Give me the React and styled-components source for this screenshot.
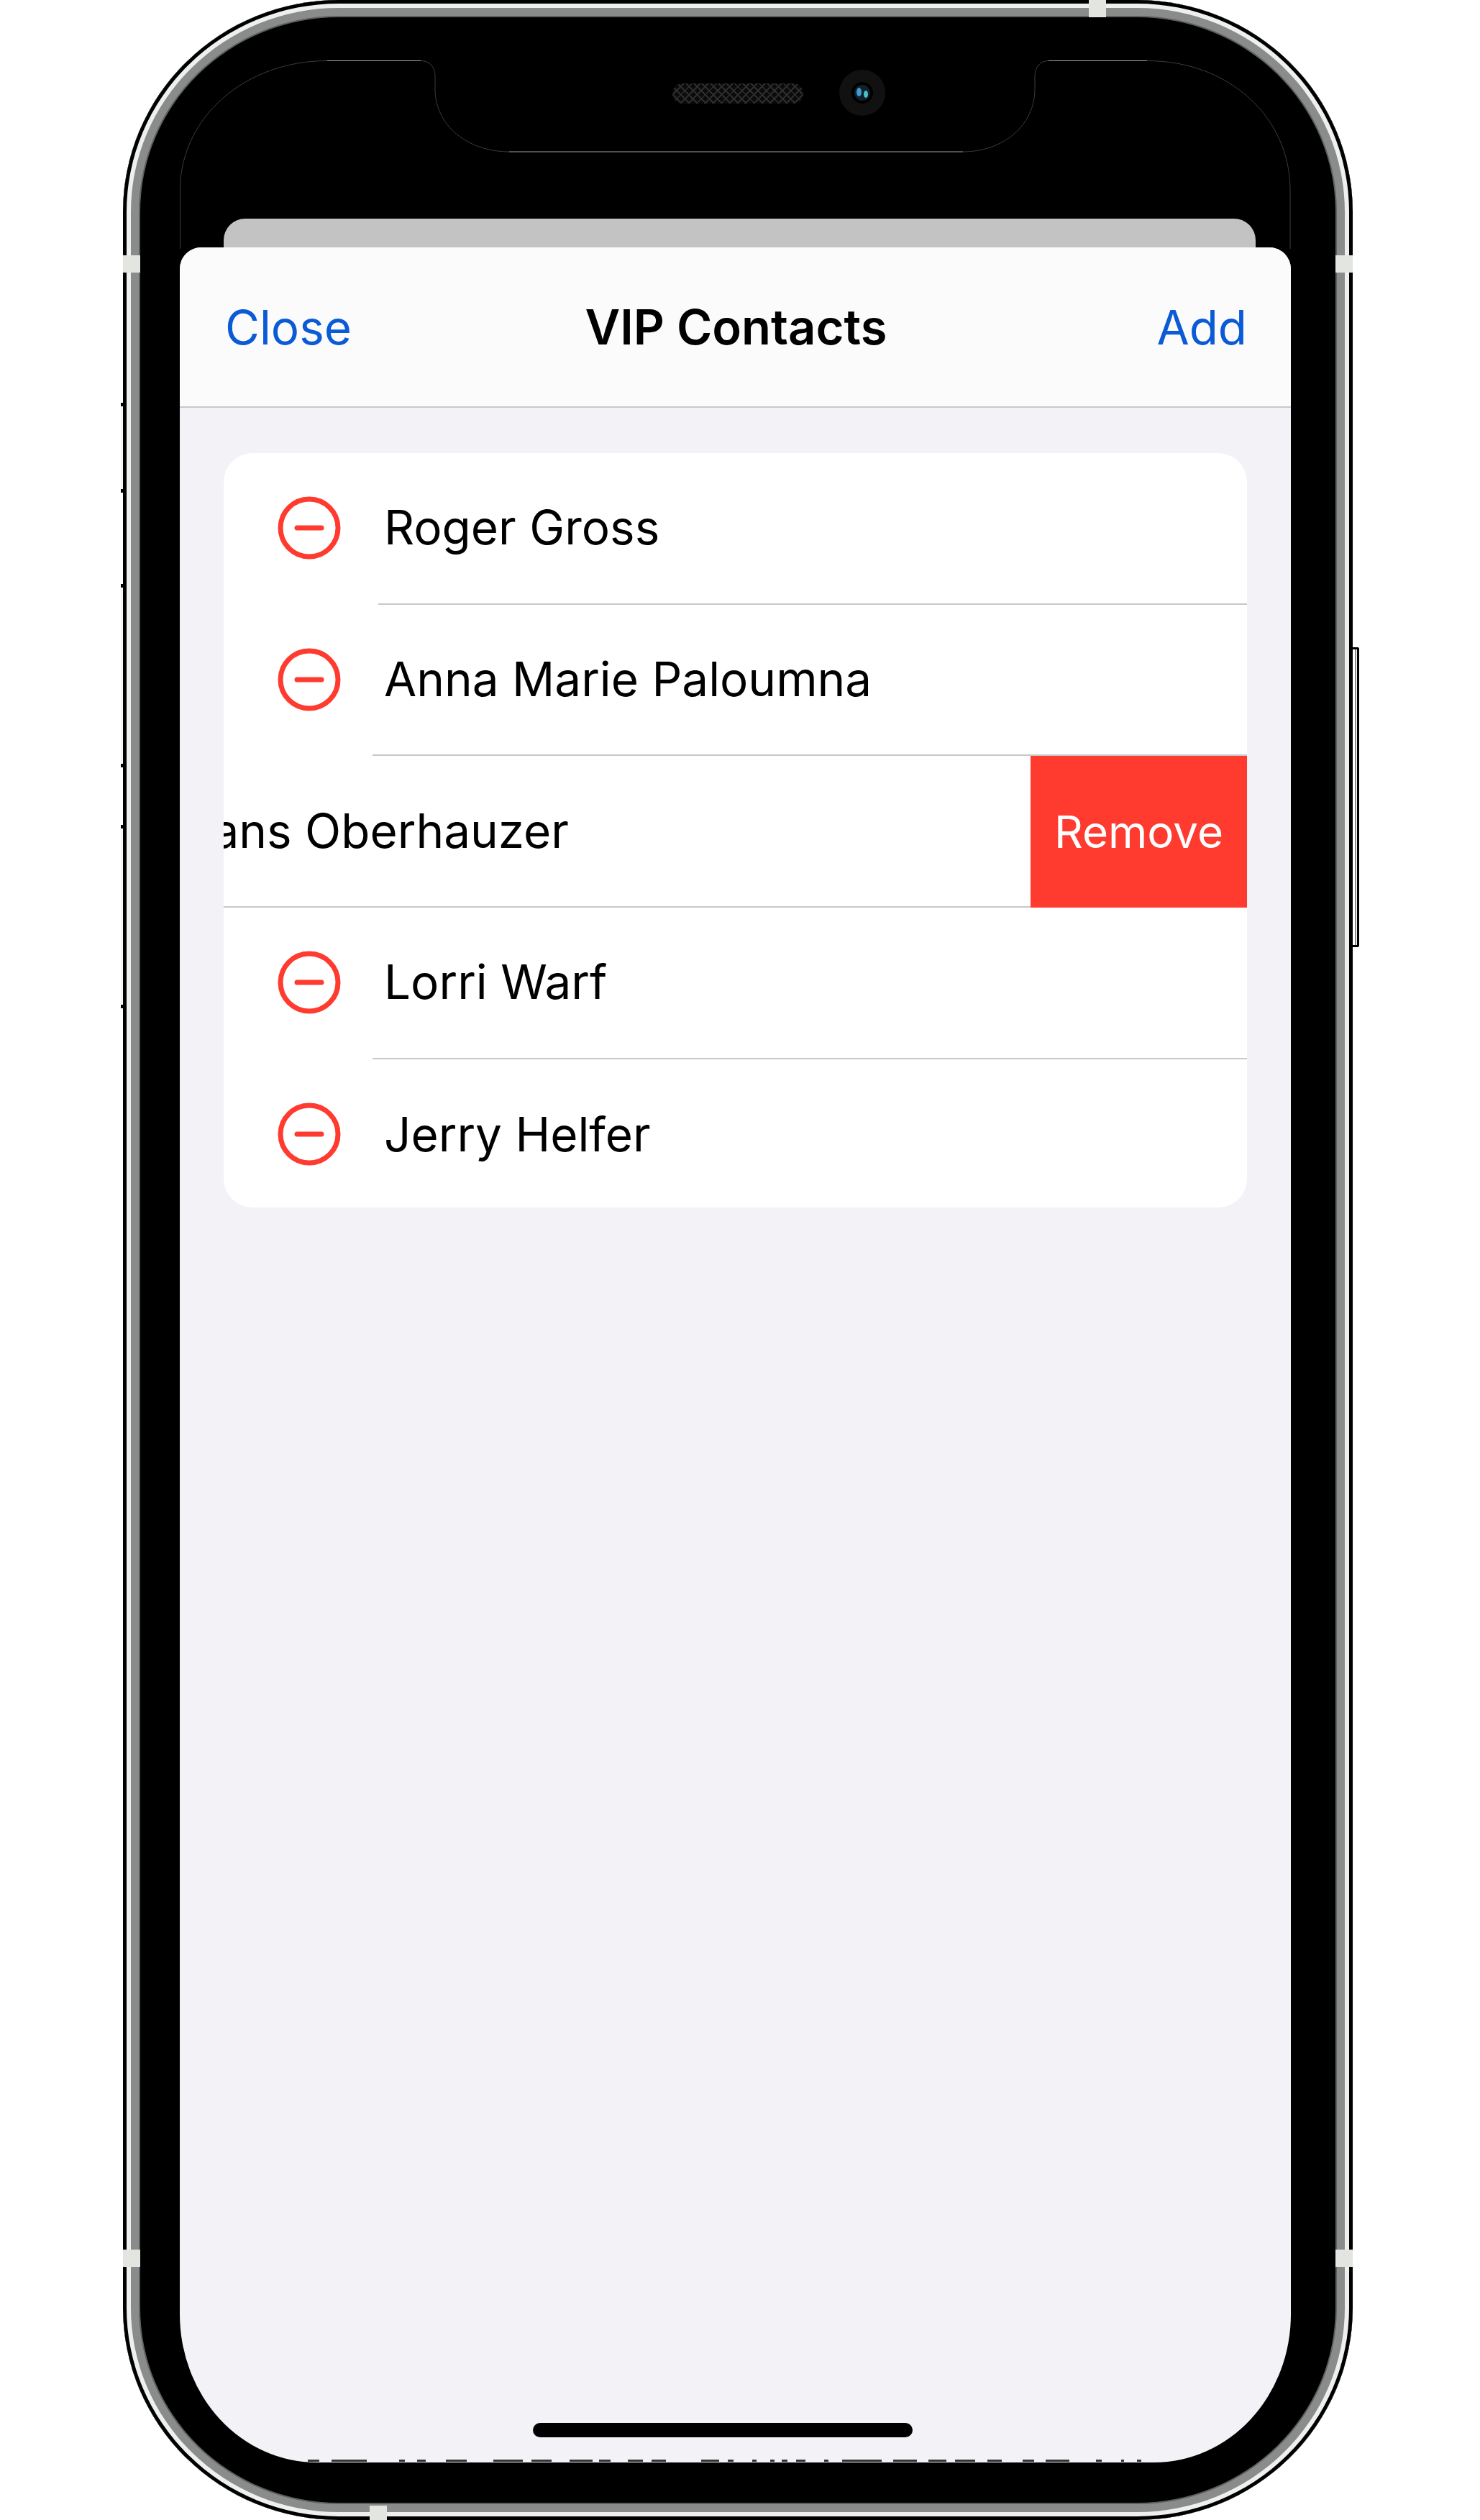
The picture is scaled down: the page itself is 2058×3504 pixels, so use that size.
import React from "react";
import styled, { createGlobalStyle } from "styled-components";

const GlobalStyle = createGlobalStyle`
  html, body {
    margin: 0;
    background: #fff;
    font-family: Inter, "Liberation Sans", sans-serif;
  }
`;

const Page = styled.div`
  box-sizing: border-box;
  height: 3504px;
  padding: 0 177px 0 171px;
`;

const Frame = styled.div`
  position: relative;
  box-sizing: border-box;
  display: flex;
  height: 100%;
  padding: 84px 86px 80px 79px;
  background: #000;
  border-radius: 300px / 295px;
  box-shadow:
    inset 0 0 0 5px #000,
    inset 0 0 0 11px #eef0ed,
    inset 0 0 0 22px #8a8c8c,
    inset 0 0 0 24px #5f6161;
`;

const AntennaBand = styled.div`
  position: absolute;
  width: 24px;
  height: 24px;
  background: #e3e5e0;
`;

const SideBand = styled(AntennaBand)`
  top: ${(p) => p.$top}px;
  ${(p) => (p.$right ? "right: 0;" : "left: 0;")}
`;

const EdgeBand = styled(AntennaBand)`
  left: ${(p) => p.$left}px;
  ${(p) => (p.$bottom ? "bottom: 0; height: 20px;" : "top: 0;")}
`;

const VolumeKey = styled.div`
  position: absolute;
  left: -3px;
  top: ${(p) => p.$top}px;
  width: 3px;
  height: ${(p) => p.$height}px;
  box-sizing: border-box;
  background: linear-gradient(to right, #e8e8e8, #fff);
  border-top: 5px solid #000;
  border-bottom: 5px solid #000;
`;

const PowerKey = styled.div`
  position: absolute;
  right: -9px;
  top: 900px;
  width: 9px;
  height: 417px;
  box-sizing: border-box;
  background: linear-gradient(to right, #fff 0 55%, #8a8a8a 55% 75%, #fff 75%);
  border: 3px solid #000;
  border-left: 0;
  border-radius: 0 3px 3px 0;
`;

const Screen = styled.div`
  position: relative;
  flex: 1;
  min-width: 0;
  display: flex;
  flex-direction: column;
  overflow: hidden;
  border-radius: 0 0 190px 190px / 0 0 206px 206px;
`;

const ScreenOutline = styled.svg`
  position: absolute;
  top: 0;
  left: 0;
`;

const TopZone = styled.div`
  box-sizing: border-box;
  height: 220px;
  flex: none;
  display: flex;
  align-items: flex-start;
  gap: 50px;
  padding: 13px 0 0 685px;
`;

const Speaker = styled.div`
  width: 182px;
  height: 28px;
  margin-top: 19px;
  border-radius: 14px;
  background-color: #0b0b0b;
  background-image:
    repeating-linear-gradient(45deg, #2c2c2c 0 2px, transparent 2px 8px),
    repeating-linear-gradient(-45deg, #2c2c2c 0 2px, transparent 2px 8px);
`;

const BackCard = styled.div`
  flex: none;
  height: 40px;
  margin: 0 49px 0 61px;
  background: #c3c3c3;
  border-radius: 30px 30px 0 0;
`;

const Sheet = styled.div`
  position: relative;
  flex: 1;
  display: flex;
  flex-direction: column;
  border-radius: 30px 30px 0 0;
  background: #f2f2f7;
  overflow: hidden;
`;

const Header = styled.header`
  box-sizing: border-box;
  flex: none;
  height: 223px;
  display: grid;
  grid-template-columns: 1fr auto 1fr;
  align-items: center;
  padding: 0 61px 0 63px;
  background: #fbfbfc;
  border-bottom: 2px solid #c8c8ca;
`;

const NavLink = styled.span`
  font-size: 65.6px;
  color: #0a5bd5;
  text-align: ${(p) => (p.$end ? "right" : "left")};
`;

const Title = styled.h1`
  margin: 0;
  font-size: 67px;
  font-weight: 600;
  color: #000;
`;

const Body = styled.main`
  flex: 1;
  padding: 63px 61px 0;
`;

const List = styled.section`
  height: 1049px;
  border-radius: 40px;
  background: #fff;
  overflow: hidden;
`;

const Row = styled.div`
  box-sizing: border-box;
  display: flex;
  align-items: stretch;
  height: 210.5px;
  padding-left: 75px;
`;

const Badge = styled.svg`
  flex: none;
  align-self: center;
  margin-top: -2px;
`;

const RowBody = styled.div`
  box-sizing: border-box;
  flex: 1;
  display: flex;
  align-items: center;
  margin-left: ${(p) => p.$rule - 162}px;
  padding-left: ${(p) => 222 - p.$rule}px;
  border-bottom: ${(p) => (p.$last ? "0" : "2px solid #c8c8ca")};
`;

const Name = styled.span`
  font-size: 65.6px;
  color: #000;
  white-space: nowrap;
  margin-top: -2px;
`;

const SwipedRow = styled.div`
  display: flex;
  height: 211px;
`;

const SwipedBody = styled.div`
  box-sizing: border-box;
  flex: 1;
  min-width: 0;
  display: flex;
  align-items: center;
  justify-content: flex-end;
  padding-right: 642px;
  border-bottom: 2px solid #c8c8ca;
`;

const RemoveButton = styled.div`
  flex: none;
  width: 301px;
  display: flex;
  align-items: center;
  justify-content: center;
  font-size: 62px;
  color: #fff;
  background: #ff3b30;
`;

const HomeBar = styled.div`
  position: absolute;
  left: 491px;
  bottom: 35px;
  width: 528px;
  height: 20px;
  border-radius: 10px;
  background: #000;
`;

const BottomArtifact = styled.svg`
  position: absolute;
  left: 0;
  bottom: 0;
`;

const contacts = [
  { name: "Roger Gross", rule: 214 },
  { name: "Anna Marie Paloumna", rule: 206 },
  { name: "Hans Oberhauzer", swiped: true },
  { name: "Lorri Warf", rule: 206 },
  { name: "Jerry Helfer", last: true, rule: 206 },
];

// bits of an upside-down text line that bleed into the bottom edge of the shot
const artifactSpans = [
  [178, 16], [211, 49], [305, 8], [330, 12], [370, 29], [436, 41], [489, 28],
  [542, 32], [583, 16], [623, 21], [656, 20], [725, 25], [762, 8], [796, 6],
  [821, 6], [837, 8], [857, 13], [896, 6], [921, 55], [992, 33],
  [1041, 25], [1078, 28], [1123, 20], [1172, 16], [1204, 33], [1274, 8],
  [1309, 4], [1331, 6],
];

const MinusBadge = () => (
  <Badge width="88" height="88" viewBox="0 0 88 88">
    <circle cx="44" cy="44" r="40" fill="none" stroke="#ff3b30" strokeWidth="7" />
    <rect x="23.5" y="40.5" width="41" height="7" rx="3.5" fill="#ff3b30" />
  </Badge>
);

const Camera = () => (
  <svg width="64" height="64" viewBox="0 0 64 64">
    <circle cx="32" cy="32" r="32" fill="#111" />
    <circle cx="32" cy="32" r="15" fill="#000" />
    <circle cx="32" cy="32" r="11" fill="#10202c" />
    <ellipse cx="27.5" cy="31" rx="3.5" ry="6" fill="#3f9ccc" />
    <ellipse cx="37" cy="34" rx="3" ry="5" fill="#4cc0c8" />
  </svg>
);

export default function App() {
  return (
    <Page>
      <GlobalStyle />
      <Frame>
        <SideBand $top={355} />
        <SideBand $top={355} $right />
        <SideBand $top={3128} />
        <SideBand $top={3128} $right />
        <EdgeBand $left={1343} />
        <EdgeBand $left={343} $bottom />

        <VolumeKey $top={560} $height={125} />
        <VolumeKey $top={812} $height={255} />
        <VolumeKey $top={1147} $height={255} />
        <PowerKey />

        <Screen>
          <ScreenOutline width="1545" height="262" viewBox="0 0 1545 262" fill="none" strokeWidth="1">
            <path
              d="M0.5 262 V180 C0.5 80 90 0.5 205 0.5 M335 0.5 C348 0.5 355 10 355 22 V40 C355 90 400 127 458 127 M1089 127 C1145 127 1189 90 1189 40 V22 C1189 10 1196 0.5 1208 0.5 M1345 0.5 C1460 0.5 1544 80 1544 180 V262"
              stroke="#3c3c3c"
            />
            <path d="M205 0.5 H335 M458 127 H1089 M1208 0.5 H1345" stroke="#a0a0a0" />
          </ScreenOutline>
          <TopZone>
            <Speaker />
            <Camera />
          </TopZone>
          <BackCard />
          <Sheet>
            <Header>
              <NavLink>Close</NavLink>
              <Title>VIP Contacts</Title>
              <NavLink $end>Add</NavLink>
            </Header>
            <Body>
              <List>
                {contacts.map((c) =>
                  c.swiped ? (
                    <SwipedRow key={c.name}>
                      <SwipedBody>
                        <Name>{c.name}</Name>
                      </SwipedBody>
                      <RemoveButton>Remove</RemoveButton>
                    </SwipedRow>
                  ) : (
                    <Row key={c.name}>
                      <MinusBadge />
                      <RowBody $rule={c.rule} $last={c.last}>
                        <Name>{c.name}</Name>
                      </RowBody>
                    </Row>
                  )
                )}
              </List>
            </Body>
            <HomeBar />
            <BottomArtifact width="1545" height="4" viewBox="0 0 1545 4">
              {artifactSpans.map(([x, w]) => (
                <rect key={x} x={x} y="0" width={w} height="3" fill="#333" />
              ))}
            </BottomArtifact>
          </Sheet>
        </Screen>
      </Frame>
    </Page>
  );
}
